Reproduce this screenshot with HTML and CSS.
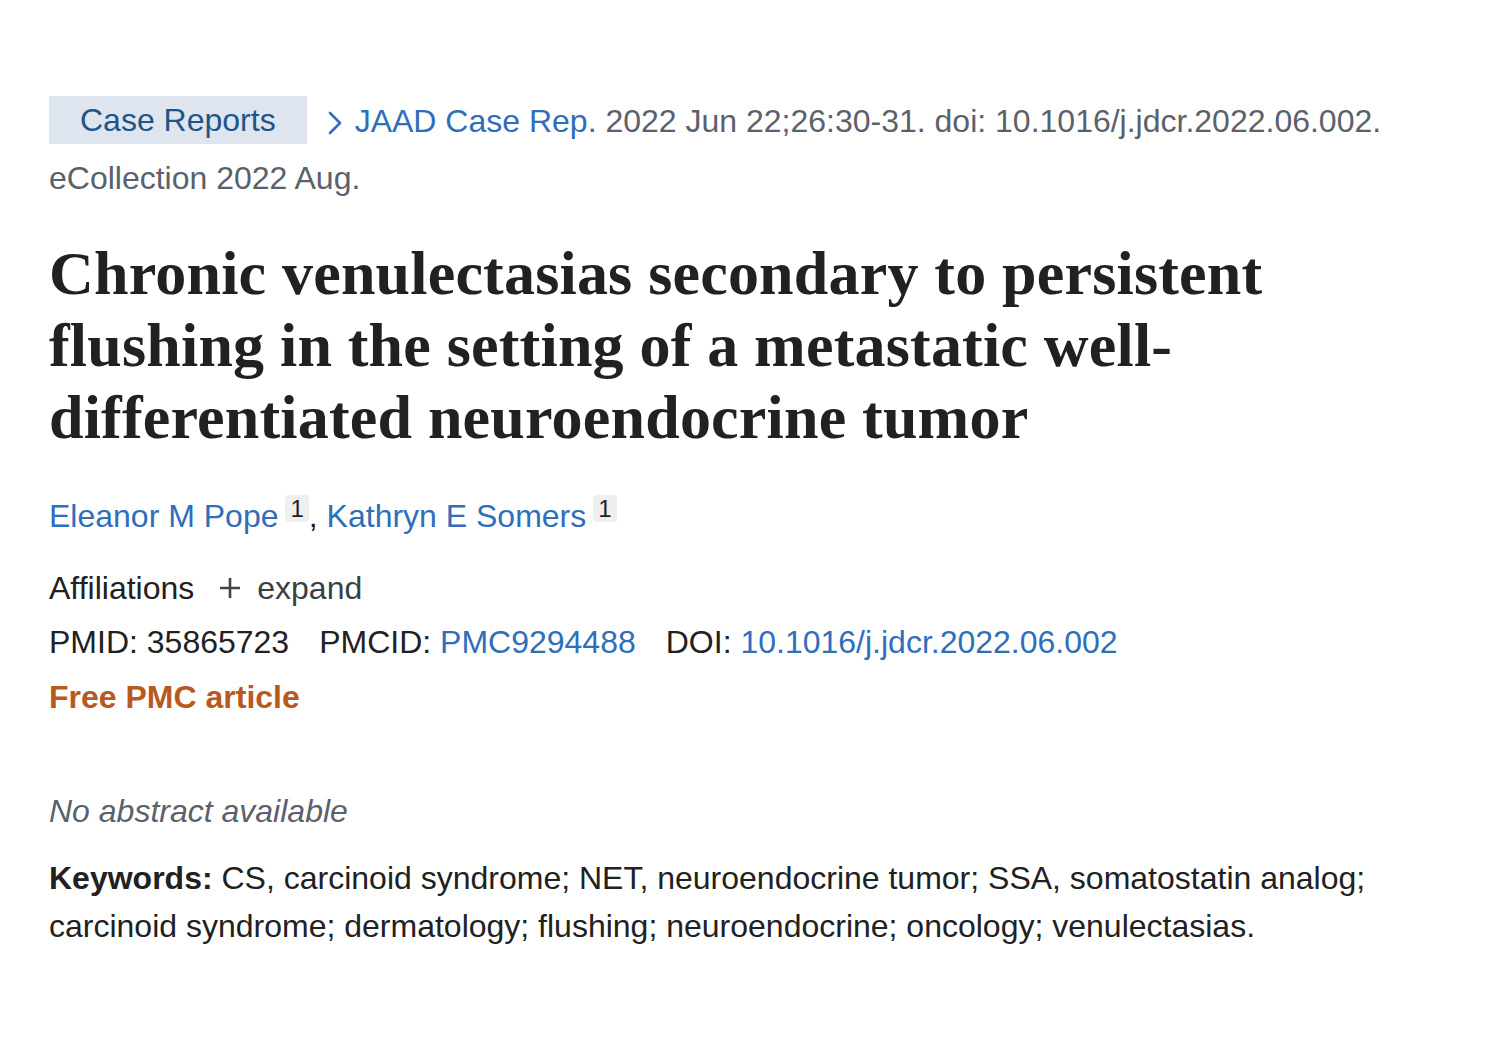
FILE: index.html
```html
<!DOCTYPE html>
<html lang="en">
<head>
<meta charset="utf-8">
<title>Chronic venulectasias secondary to persistent flushing</title>
<link rel="stylesheet" href="styles.css">
</head>
<body>
<main class="article">
  <div class="citation"><span class="pub-type">Case Reports</span><span class="journal"><svg class="chev" width="18" height="26" viewBox="0 0 18 26"><path d="M4 3 L14 13 L4 23" fill="none" stroke="#2f6eba" stroke-width="2.6" stroke-linecap="round" stroke-linejoin="round"/></svg><a class="link" href="#">JAAD Case Rep.</a></span> 2022 Jun 22;26:30-31. doi: 10.1016/j.jdcr.2022.06.002. eCollection 2022 Aug.</div>

  <h1 class="title">Chronic venulectasias secondary to persistent flushing in the setting of a metastatic well-differentiated neuroendocrine tumor</h1>

  <div class="authors">
    <a class="link" href="#">Eleanor M Pope</a><sup class="aff-num">1</sup>, <a class="link" href="#">Kathryn E Somers</a><sup class="aff-num">1</sup>
  </div>

  <div class="affiliations">
    <span>Affiliations</span>
    <span class="expand"><svg class="plus" width="24" height="24" viewBox="0 0 24 24"><path d="M12 2 V22 M2 12 H22" stroke="#444" stroke-width="2.6"/></svg>expand</span>
  </div>

  <ul class="ids">
    <li>PMID: <span>35865723</span></li>
    <li>PMCID: <a class="link" href="#">PMC9294488</a></li>
    <li>DOI: <a class="link" href="#">10.1016/j.jdcr.2022.06.002</a></li>
  </ul>

  <div class="free">Free PMC article</div>

  <p class="no-abstract">No abstract available</p>

  <p class="keywords"><strong>Keywords:</strong> CS, carcinoid syndrome; NET, neuroendocrine tumor; SSA, somatostatin analog; carcinoid syndrome; dermatology; flushing; neuroendocrine; oncology; venulectasias.</p>
</main>
</body>
</html>
```

FILE: styles.css
```css
html, body {
  margin: 0;
  padding: 0;
  background: #ffffff;
}

body {
  font-family: "Liberation Sans", Arial, sans-serif;
  color: #212121;
  font-size: 32px;
}

.article {
  padding: 95px 0 0 49px;
  width: 1360px;
}

.link {
  color: #2f6eba;
  text-decoration: none;
}

.citation {
  line-height: 57px;
  color: #5b616b;
  margin-top: -2px;
}

.pub-type {
  display: inline-block;
  background: #dfe5ef;
  color: #20558a;
  line-height: 48px;
  padding: 0 31px;
  vertical-align: 1px;
}

.journal {
  margin-left: 19px;
}

.chev {
  vertical-align: -4px;
  margin-right: 11px;
}

.title {
  font-family: "Liberation Serif", "Times New Roman", serif;
  font-weight: 700;
  font-size: 62px;
  line-height: 72px;
  color: #212121;
  margin: 30px 0 0 0;
  letter-spacing: 0.2px;
}

.authors {
  margin-top: 41px;
  line-height: 44px;
}

.aff-num {
  display: inline-block;
  background: #efefef;
  border-radius: 4px;
  font-size: 24px;
  line-height: 27px;
  padding: 0 5px;
  margin-left: 7px;
  color: #212121;
  vertical-align: 10px;
}

.affiliations {
  margin-top: 28px;
  line-height: 44px;
  display: flex;
  align-items: center;
}

.expand {
  color: #3a3f47;
  margin-left: 24px;
  display: inline-flex;
  align-items: center;
}

.plus {
  margin-right: 15px;
}

.ids {
  list-style: none;
  margin: 10px 0 0 0;
  padding: 0;
  display: flex;
  gap: 30px;
  line-height: 44px;
}

.free {
  margin-top: 11px;
  color: #b85a1f;
  font-weight: 700;
  line-height: 44px;
}

.no-abstract {
  margin: 70px 0 0 0;
  font-style: italic;
  color: #5b616b;
  line-height: 44px;
}

.keywords {
  margin: 21px 0 0 0;
  line-height: 48px;
}

.keywords strong {
  font-weight: 700;
}
```
